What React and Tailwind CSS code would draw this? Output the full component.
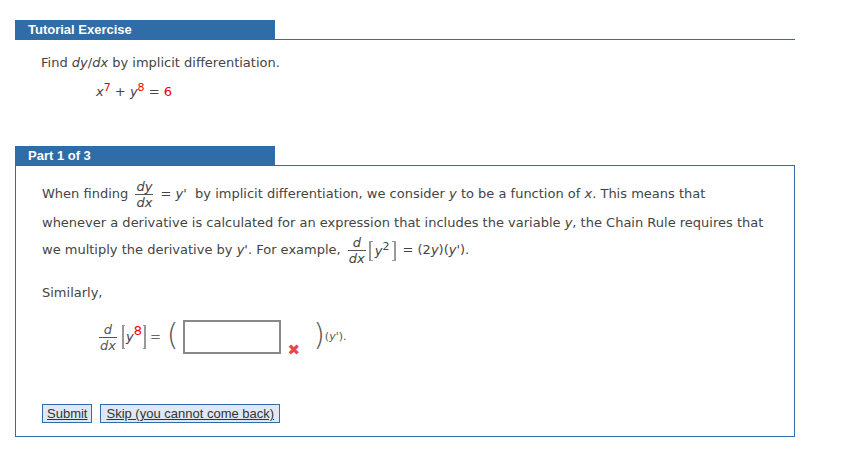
import React from 'react';

const blue = 'bg-[#2f6ca8]';

function Frac({ num, den, className = '' }) {
  return (
    <span className={`inline-flex flex-col items-center align-middle leading-none mx-[3px] ${className}`}>
      <span className="italic px-[1px] pb-[1px]">{num}</span>
      <span className="block w-full h-px bg-[#555]"></span>
      <span className="italic px-[1px] pt-[1px]">{den}</span>
    </span>
  );
}

function Bracket({ children, tall = 'h-[22px]', pad = 'px-[2px]', w = 'w-[4px]' }) {
  return (
    <span className={`inline-flex items-center align-middle ${tall}`}>
      <span className={`inline-block ${w} ${tall} border-l-2 border-t border-b border-[#999]`}></span>
      <span className={pad}>{children}</span>
      <span className={`inline-block ${w} ${tall} border-r-2 border-t border-b border-[#999]`}></span>
    </span>
  );
}

export default function App() {
  return (
    <div className="bg-white w-[867px] h-[452px] pt-[20px] pl-[15px] text-[#444] text-[13px]" style={{ fontFamily: '"DejaVu Sans", Verdana, sans-serif' }}>
      <div className="w-[780px] border-b border-[#2f6ca8]">
        <div className={`${blue} w-[260px] h-[19px] pl-[13px] text-white font-bold text-[13px] leading-[19px]`} style={{ fontFamily: '"Liberation Sans", Arial, sans-serif' }}>
          Tutorial Exercise
        </div>
      </div>

      <div className="pl-[26px] pt-[14px]">
        <p className="leading-[18px]">
          Find <i>dy</i>/<i>dx</i> by implicit differentiation.
        </p>
        <p className="pl-[55px] pt-[11px] leading-[18px]">
          <i>x</i><sup className="text-[#e00] text-[11px]">7</sup> + <i>y</i><sup className="text-[#e00] text-[11px]">8</sup> = <span className="text-[#e00]">6</span>
        </p>
      </div>

      <div className="mt-[45px] w-[780px]">
        <div className={`${blue} w-[260px] h-[19px] pl-[13px] text-white font-bold text-[13px] leading-[19px]`} style={{ fontFamily: '"Liberation Sans", Arial, sans-serif' }}>
          Part 1 of 3
        </div>
        <div className="border border-[#2f6ca8] h-[272px] pl-[26px] pt-[14px]">
          <p className="leading-[27px] whitespace-nowrap">
            When finding <Frac num="dy" den="dx" /> = <i>y'</i>&nbsp; by implicit differentiation, we consider <i>y</i> to be a function of <i>x</i>. This means that
            <br />
            whenever a derivative is calculated for an expression that includes the variable <i>y</i>, the Chain Rule requires that
            <br />
            we multiply the derivative by <i>y'</i>. For example, <Frac num="d" den="dx" />
            <Bracket tall="h-[20px]">
              <i>y</i><sup className="text-[11px]">2</sup>
            </Bracket>
            <span className="ml-[7px]">= (2<i>y</i>)(<i>y'</i>).</span>
          </p>

          <p className="mt-[19px] leading-[18px]">Similarly,</p>

          <div className="flex items-center pl-[54px] mt-[18px] h-[34px]">
            <Frac num="d" den="dx" className="text-[#555]" />
            <span className="ml-[2px]">
              <Bracket tall="h-[24px]" pad="px-[1px]" w="w-[3px]">
                <i>y</i><sup className="text-[#e00] text-[13px]">8</sup>
              </Bracket>
            </span>
            <span className="ml-[4px] text-[#666]">=</span>
            <span className="ml-[6px] text-[30px] font-extralight leading-none text-[#555] -mt-[4px]">(</span>
            <input type="text" className="ml-[4px] w-[98px] h-[34px] border-2 border-[#888] bg-white outline-none" />
            <span className="ml-[7px] mt-[26px] text-[#e5484d] text-[15px] leading-none">✖</span>
            <span className="ml-[13px] text-[30px] font-extralight leading-none text-[#555] -mt-[4px]">)</span>
            <span className="text-[11px] text-[#555]">(<i>y'</i>).</span>
          </div>

          <div className="flex gap-[8px] mt-[50px]" style={{ fontFamily: '"Liberation Sans", Arial, sans-serif' }}>
            <button className="h-[19px] px-[4px] border border-[#2f6ca8] bg-[#dfe8f4] text-[#333] text-[13px] leading-[17px] underline">Submit</button>
            <button className="h-[19px] px-[5px] border border-[#2f6ca8] bg-[#dfe8f4] text-[#333] text-[13px] leading-[17px] underline">Skip (you cannot come back)</button>
          </div>
        </div>
      </div>
    </div>
  );
}
